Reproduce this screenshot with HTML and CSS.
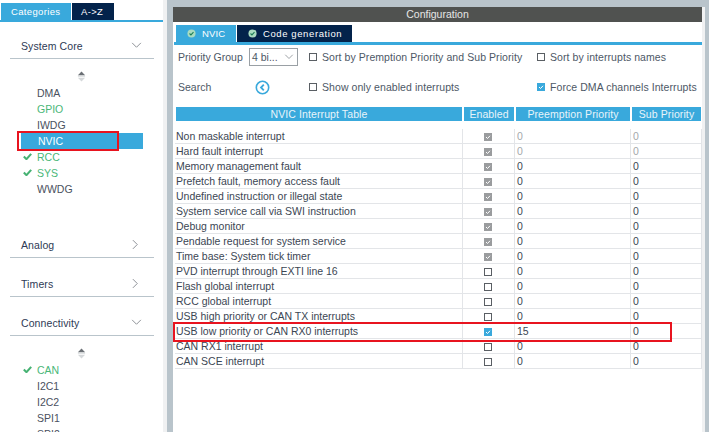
FILE: index.html
```html
<!DOCTYPE html>
<html lang="en">
<head>
<meta charset="utf-8">
<title>Configuration</title>
<link rel="stylesheet" href="styles.css">
</head>
<body>
<svg class="defs" width="0" height="0">
  <symbol id="chev-down" viewBox="0 0 12 8"><path d="M1 1l5 5 5-5" fill="none" stroke="#7f8489" stroke-width="1"/></symbol>
  <symbol id="chev-right" viewBox="0 0 8 12"><path d="M1 1l5 5-5 5" fill="none" stroke="#7f8489" stroke-width="1"/></symbol>
  <symbol id="updown" viewBox="0 0 10 11"><path d="M5 0l4 4H1z" fill="#6b7075"/><path d="M5 11L1 7h8z" fill="#d5d8da"/><path d="M1 5h8" stroke="#c4c8cb"/></symbol>
  <symbol id="tick" viewBox="0 0 10 8"><path d="M.8 4l3 3 5.4-6" fill="none" stroke="#46b273" stroke-width="2.4"/></symbol>
  <symbol id="tab-ok" viewBox="0 0 10 10"><circle cx="5" cy="5" r="4.5" fill="#a9dcc0"/><path d="M2.8 5l1.6 1.6 2.8-3" fill="none" stroke="#1c7f56" stroke-width="1.2"/></symbol>
  <symbol id="mini" viewBox="0 0 8 8"><path d="M2 4l1.5 1.5L6 2.8" fill="none" stroke="#fff" stroke-width="1"/></symbol>
</svg>
<div class="app">
  <aside class="side">
    <div class="side-tabs">
      <div class="tab tab-on tab-cat">Categories</div>
      <div class="tab tab-off tab-az">A-&gt;Z</div>
    </div>
    <div class="sec-head sec-first"><span>System Core</span><svg class="ch-d ch-first"><use href="#chev-down"/></svg></div>
    <div class="updown"><svg class="ud"><use href="#updown"/></svg></div>
    <ul class="list">
      <li class="item">DMA</li>
      <li class="item ok">GPIO</li>
      <li class="item">IWDG</li>
      <li class="item sel">NVIC</li>
      <li class="item ok"><svg class="tk"><use href="#tick"/></svg>RCC</li>
      <li class="item ok"><svg class="tk"><use href="#tick"/></svg>SYS</li>
      <li class="item">WWDG</li>
    </ul>
    <div class="sec-head sec-gap"><span>Analog</span><svg class="ch-r"><use href="#chev-right"/></svg></div>
    <div class="sec-head"><span>Timers</span><svg class="ch-r"><use href="#chev-right"/></svg></div>
    <div class="sec-head"><span>Connectivity</span><svg class="ch-d"><use href="#chev-down"/></svg></div>
    <div class="updown"><svg class="ud"><use href="#updown"/></svg></div>
    <ul class="list">
      <li class="item ok"><svg class="tk"><use href="#tick"/></svg>CAN</li>
      <li class="item">I2C1</li>
      <li class="item">I2C2</li>
      <li class="item">SPI1</li>
      <li class="item">SPI2</li>
    </ul>
    <div class="mark mark-nvic"></div>
  </aside>
  <main class="main">
    <div class="title">Configuration</div>
    <div class="main-tabs">
      <div class="tab tab-on tab-nvic"><svg class="tab-ic"><use href="#tab-ok"/></svg>NVIC</div>
      <div class="tab tab-off tab-code"><svg class="tab-ic"><use href="#tab-ok"/></svg>Code generation</div>
    </div>
    <div class="tools">
      <span class="lbl">Priority Group</span>
      <div class="select"><span>4 bi...</span><svg class="sel-ch"><use href="#chev-down"/></svg></div>
      <label class="opt"><i class="cb"></i>Sort by Premption Priority and Sub Priority</label>
      <label class="opt"><i class="cb"></i>Sort by interrupts names</label>
      <span class="lbl">Search</span>
      <div class="search-ic"><svg width="15" height="15" viewBox="0 0 15 15"><circle cx="7.5" cy="7.5" r="6.2" fill="none" stroke="#39a9dc" stroke-width="1.6"/><path d="M8.8 4.6L6 7.5l2.8 2.9" fill="none" stroke="#39a9dc" stroke-width="1.8"/></svg></div>
      <label class="opt"><i class="cb"></i>Show only enabled interrupts</label>
      <label class="opt"><i class="cb cb-blue"><svg class="mini"><use href="#mini"/></svg></i>Force DMA channels Interrupts</label>
    </div>
    <div class="thead">
      <div>NVIC Interrupt Table</div><div>Enabled</div><div>Preemption Priority</div><div>Sub Priority</div>
    </div>
    <div class="tbody">
      <div class="row"><div class="c-name">Non maskable interrupt</div><div class="c-en"><i class="cb cb-gray"><svg class="mini"><use href="#mini"/></svg></i></div><div class="c-num dim">0</div><div class="c-num dim">0</div></div>
      <div class="row"><div class="c-name">Hard fault interrupt</div><div class="c-en"><i class="cb cb-gray"><svg class="mini"><use href="#mini"/></svg></i></div><div class="c-num dim">0</div><div class="c-num dim">0</div></div>
      <div class="row"><div class="c-name">Memory management fault</div><div class="c-en"><i class="cb cb-gray"><svg class="mini"><use href="#mini"/></svg></i></div><div class="c-num">0</div><div class="c-num">0</div></div>
      <div class="row"><div class="c-name">Prefetch fault, memory access fault</div><div class="c-en"><i class="cb cb-gray"><svg class="mini"><use href="#mini"/></svg></i></div><div class="c-num">0</div><div class="c-num">0</div></div>
      <div class="row"><div class="c-name">Undefined instruction or illegal state</div><div class="c-en"><i class="cb cb-gray"><svg class="mini"><use href="#mini"/></svg></i></div><div class="c-num">0</div><div class="c-num">0</div></div>
      <div class="row"><div class="c-name">System service call via SWI instruction</div><div class="c-en"><i class="cb cb-gray"><svg class="mini"><use href="#mini"/></svg></i></div><div class="c-num">0</div><div class="c-num">0</div></div>
      <div class="row"><div class="c-name">Debug monitor</div><div class="c-en"><i class="cb cb-gray"><svg class="mini"><use href="#mini"/></svg></i></div><div class="c-num">0</div><div class="c-num">0</div></div>
      <div class="row"><div class="c-name">Pendable request for system service</div><div class="c-en"><i class="cb cb-gray"><svg class="mini"><use href="#mini"/></svg></i></div><div class="c-num">0</div><div class="c-num">0</div></div>
      <div class="row"><div class="c-name">Time base: System tick timer</div><div class="c-en"><i class="cb cb-gray"><svg class="mini"><use href="#mini"/></svg></i></div><div class="c-num">0</div><div class="c-num">0</div></div>
      <div class="row"><div class="c-name">PVD interrupt through EXTI line 16</div><div class="c-en"><i class="cb"></i></div><div class="c-num">0</div><div class="c-num">0</div></div>
      <div class="row"><div class="c-name">Flash global interrupt</div><div class="c-en"><i class="cb"></i></div><div class="c-num">0</div><div class="c-num">0</div></div>
      <div class="row"><div class="c-name">RCC global interrupt</div><div class="c-en"><i class="cb"></i></div><div class="c-num">0</div><div class="c-num">0</div></div>
      <div class="row"><div class="c-name">USB high priority or CAN TX interrupts</div><div class="c-en"><i class="cb"></i></div><div class="c-num">0</div><div class="c-num">0</div></div>
      <div class="row"><div class="c-name">USB low priority or CAN RX0 interrupts</div><div class="c-en"><i class="cb cb-blue"><svg class="mini"><use href="#mini"/></svg></i></div><div class="c-num">15</div><div class="c-num">0</div></div>
      <div class="row"><div class="c-name">CAN RX1 interrupt</div><div class="c-en"><i class="cb"></i></div><div class="c-num">0</div><div class="c-num">0</div></div>
      <div class="row"><div class="c-name">CAN SCE interrupt</div><div class="c-en"><i class="cb"></i></div><div class="c-num">0</div><div class="c-num">0</div></div>
      <div class="mark mark-usb"></div>
    </div>
  </main>
</div>
</body>
</html>
```
FILE: styles.css
```css
* { box-sizing: border-box; }
html, body { margin: 0; height: 100%; overflow: hidden; }
body {
  background: #b9c4cb;
  font-family: "Liberation Sans", Arial, sans-serif;
  font-size: 10.5px;
  color: #3b4653;
}
.defs { position: absolute; }
.app { display: flex; height: 432px; }

/* sidebar */
.side {
  position: relative;
  width: 167px;
  flex: none;
  height: 432px;
  overflow: hidden;
  background: #fff;
  border-right: 4px solid #f0f1f2;
  margin-right: 6px;
}
.side-tabs {
  display: flex;
  gap: 1px;
  height: 22px;
  padding: 3px 0 0 1px;
  width: 165px;
  border-bottom: 2px solid #39a9dc;
}
.tab {
  height: 17px;
  line-height: 17px;
  font-size: 9.5px;
  letter-spacing: .35px;
  color: #fff;
}
.tab-on { background: #39a9dc; }
.tab-off { background: #03234b; }
.tab-cat { width: 70px; padding-left: 10px; }
.tab-az { width: 42px; padding-left: 9px; }
.sec-head {
  display: flex;
  align-items: flex-end;
  justify-content: space-between;
  position: relative;
  height: 39px;
  margin: 0 9px 0 10px;
  padding: 0 0 4px 11px;
  border-bottom: 1px solid #b9c4cb;
  color: #2e3a55;
  font-size: 10.5px;
  letter-spacing: .1px;
  line-height: 15px;
}
.sec-first { height: 37px; }
.sec-gap { margin-top: 22px; }
.ch-d { position: absolute; right: 12px; top: 22px; width: 11px; height: 7px; }
.ch-first { top: 20px; }
.ch-r { position: absolute; right: 15px; top: 20px; width: 7px; height: 11px; }
.updown { height: 26px; padding: 12px 0 0 77px; }
.ud { display: block; width: 9px; height: 11px; }
.list { list-style: none; margin: 0; padding: 0 0 0 21px; }
.item {
  position: relative;
  width: 122px;
  height: 16px;
  line-height: 16px;
  padding-left: 16px;
  color: #4a5160;
}
.ok { color: #49b778; }
.sel { background: #39a9dc; color: #fff; padding-left: 17px; }
.tk { position: absolute; left: 2px; top: 4px; width: 9px; height: 7px; }
.mark { position: absolute; border: 2px solid #e8141f; pointer-events: none; }
.mark-nvic { left: 17px; top: 131px; width: 102px; height: 20px; }

/* main */
.main {
  flex: none;
  width: 532px;
  height: 425px;
  margin-top: 7px;
  background: #fff;
  border-right: 3px solid #f0f1f2;
}
.title {
  height: 15px;
  line-height: 15px;
  background: #505250;
  color: #e6e6e6;
  text-align: center;
  font-size: 10.5px;
}
.main-tabs {
  display: flex;
  gap: 1px;
  height: 23px;
  padding: 3px 0 0 2px;
  margin-left: 1px;
  border-bottom: 3px solid #39a9dc;
}
.tab-nvic { width: 60px; padding-left: 11px; letter-spacing: .1px; }
.tab-code { width: 115px; padding-left: 11px; letter-spacing: .6px; }
.tab-ic { width: 9px; height: 9px; margin-right: 6px; vertical-align: -1px; }
.tools {
  display: grid;
  grid-template-columns: 71px 60px 228px 1fr;
  grid-template-rows: 24px 36px;
  align-items: center;
  padding-left: 5px;
  height: 62px;
}
.lbl { color: #4d5866; }
.select {
  display: flex;
  align-items: center;
  justify-content: space-between;
  width: 49px;
  height: 18px;
  border: 1px solid #9aa0a5;
  padding: 0 3px 0 2px;
  color: #4d5866;
}
.sel-ch { width: 10px; height: 6px; }
.search-ic { padding-left: 6px; height: 15px; }
.search-ic svg { display: block; }
.opt { display: flex; align-items: center; gap: 5px; color: #4d5866; letter-spacing: .07px; white-space: nowrap; }
.cb {
  display: block;
  flex: none;
  width: 8px;
  height: 8px;
  border: 1px solid #5a5f64;
  background: #fff;
}
.cb-gray, .cb-blue { border: 0; }
.cb-gray { background: #9a9c9e; }
.cb-blue { background: #39a9dc; }
.mini { display: block; width: 8px; height: 8px; }
.thead {
  display: grid;
  grid-template-columns: 286px 50px 114px 69px;
  gap: 2px;
  margin-left: 3px;
  height: 14px;
  line-height: 14px;
  background: #fff;
  color: #e8f4fa;
  text-align: center;
  letter-spacing: .1px;
}
.thead div { background: #39a9dc; }
.tbody { position: relative; margin: 8px 0 0 2px; width: 527px; }
.row {
  display: grid;
  grid-template-columns: 288px 52px 116px 71px;
  height: 15px;
  line-height: 15px;
  border-bottom: 1px solid #e3e5e8;
}
.row > div { border-right: 1px solid #e3e5e8; }
.c-name { padding-left: 1px; color: #3b4653; }
.c-en { display: flex; align-items: center; justify-content: center; padding-right: 1px; }
.c-num { padding-left: 2px; color: #3b4653; }
.dim { color: #a5a8ab; }
.mark-usb { left: -2px; top: 193px; width: 499px; height: 20px; }
```
